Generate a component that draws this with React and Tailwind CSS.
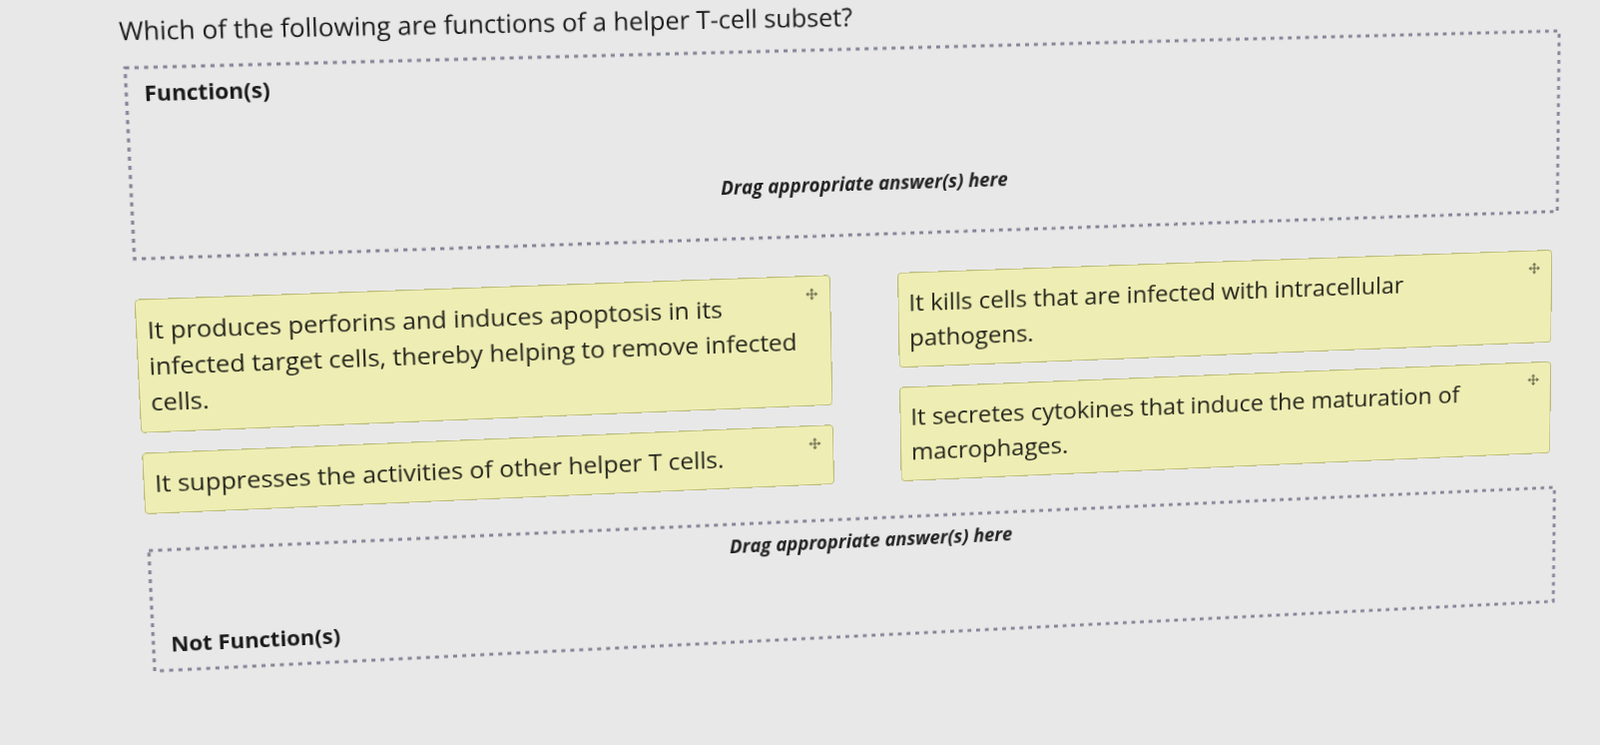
import React from 'react';

// corners of the two drop zones as they sit in the photo (TL, TR, BR, BL)
const FLAT = { left: 123, top: 66, width: 1440, height: 607 };
const PHOTO = [[123, 66], [1563, 29], [1557, 603], [153, 673]];

// unit square -> quad (Heckbert), then scale the flat rect down to the unit square
const perspective = () => {
  const [[x0, y0], [x1, y1], [x2, y2], [x3, y3]] = PHOTO;
  const sx = x0 - x1 + x2 - x3;
  const sy = y0 - y1 + y2 - y3;
  const dx1 = x1 - x2, dx2 = x3 - x2, dy1 = y1 - y2, dy2 = y3 - y2;
  const den = dx1 * dy2 - dy1 * dx2;
  const g = (sx * dy2 - sy * dx2) / den;
  const h = (dx1 * sy - dy1 * sx) / den;
  const a = x1 - x0 + g * x1, b = x3 - x0 + h * x3, c = x0;
  const d = y1 - y0 + g * y1, e = y3 - y0 + h * y3, f = y0;
  const { left, top, width, height } = FLAT;
  const m = [
    [a / width, b / height, c - (a * left) / width - (b * top) / height],
    [d / width, e / height, f - (d * left) / width - (e * top) / height],
    [g / width, h / height, 1 - (g * left) / width - (h * top) / height],
  ];
  return `matrix3d(${m[0][0]},${m[1][0]},0,${m[2][0]},${m[0][1]},${m[1][1]},0,${m[2][1]},0,0,1,0,${m[0][2]},${m[1][2]},0,${m[2][2]})`;
};

const MoveIcon = () => (
  <svg viewBox="0 0 12 12" className="absolute right-3 top-3 h-3 w-3 text-[#5c5c42]" fill="currentColor">
    <path d="M5.4 2.4h1.2v7.2H5.4z M2.4 5.4h7.2v1.2H2.4z" />
    <path d="M6 0 8.2 2.6H3.8z M6 12 3.8 9.4h4.4z M0 6 2.6 3.8v4.4z M12 6 9.4 8.2V3.8z" />
  </svg>
);

// square-dotted outline like the drop targets have, drawn over the 3px transparent border
const DottedFrame = () => (
  <svg className="pointer-events-none absolute -left-[1.5px] -top-[1.5px] h-[calc(100%+3px)] w-[calc(100%+3px)] overflow-visible">
    <rect x="0" y="0" width="100%" height="100%" fill="none" stroke="#838397" strokeWidth="3" strokeDasharray="4 5" />
  </svg>
);

const Card = ({ lines }) => (
  <div className="relative whitespace-nowrap rounded-[4px] border border-[#bcbc7c] bg-[#eeeeb4] py-3 pl-[10px] pr-8 text-[24.5px] leading-[36px] text-[#23231b]">
    {lines.map((line, i) => (
      <div key={i}>{line}</div>
    ))}
    <MoveIcon />
  </div>
);

const App = () => {
  return (
    <div className="min-h-screen overflow-hidden bg-[#e8e8e8]">
      <div
        className="h-[746px] w-[1603px] origin-top-left pl-[123px] pt-[14px] font-['Open_Sans',sans-serif]"
        style={{ transform: perspective() }}
      >
        <h1 className="-ml-[2px] w-fit origin-left rotate-[0.3deg] text-[25px] leading-[34px] text-[#1a1a1a]">
          Which of the following are functions of a helper T-cell subset?
        </h1>

        {/* answers that belong */}
        <section className="relative mt-[18px] flex h-[191px] w-[1440px] flex-col border-[3px] border-transparent pt-[9px]">
          <DottedFrame />
          <h2 className="pl-4 text-[21.5px] font-bold leading-[30px] text-[#1a1a1a]">Function(s)</h2>
          <p className="mt-[83px] text-center text-[18.8px] font-bold italic leading-[26px] text-[#222]">
            Drag appropriate answer(s) here
          </p>
        </section>

        {/* answer pool */}
        <div className="mt-[39px] grid w-[1434px] grid-cols-2 items-start gap-x-[68px]">
          <div className="flex flex-col gap-5">
            <Card
              lines={[
                'It produces perforins and induces apoptosis in its',
                'infected target cells, thereby helping to remove infected',
                'cells.',
              ]}
            />
            <Card lines={['It suppresses the activities of other helper T cells.']} />
          </div>
          <div className="flex flex-col gap-5">
            <Card lines={['It kills cells that are infected with intracellular', 'pathogens.']} />
            <Card lines={['It secretes cytokines that induce the maturation of', 'macrophages.']} />
          </div>
        </div>

        {/* answers that don't belong */}
        <section className="relative mt-[35px] flex h-[126px] w-[1440px] flex-col border-[3px] border-transparent pt-[9px]">
          <DottedFrame />
          <p className="text-center text-[18.8px] font-bold italic leading-[26px] text-[#222]">
            Drag appropriate answer(s) here
          </p>
          <h2 className="mt-[45px] pl-4 text-[21.5px] font-bold leading-[30px] text-[#1a1a1a]">Not Function(s)</h2>
        </section>
      </div>
    </div>
  );
};

export default App;
